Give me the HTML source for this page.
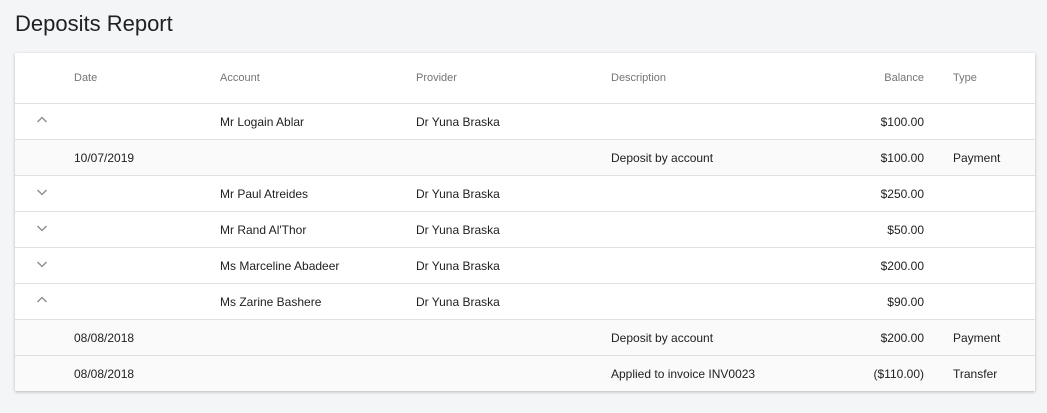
<!DOCTYPE html>
<html><head><style>
body{margin:0;width:1047px;height:413px;background:#f4f5f7;font-family:"Liberation Sans",Arial,sans-serif;color:#212121;position:relative;overflow:hidden}
h1{position:absolute;left:15px;top:11px;margin:0;font-size:22px;font-weight:normal;color:#212121}
.card{position:absolute;left:15px;top:53px;width:1020px;height:338px;background:#fff;box-shadow:0 1px 3px rgba(0,0,0,.25)}
.row{position:absolute;left:0;width:1020px;height:36px;border-top:1px solid #e0e0e0;box-sizing:border-box;font-size:12px;line-height:37px}
.row.sub{background:#fafafa}
.hd{position:absolute;top:0;left:0;width:1020px;height:50px;font-size:11px;line-height:51px;color:#757575}
.c{position:absolute;top:0;white-space:nowrap}
.d{left:59px}.a{left:205px}.p{left:401px}.ds{left:596px}.b{right:111px;text-align:right}.t{left:938px}
.ic{position:absolute;left:21px;top:12px}
</style></head><body>
<h1>Deposits Report</h1>
<div class="card">
<div class="hd"><span class="c d">Date</span><span class="c a">Account</span><span class="c p">Provider</span><span class="c ds">Description</span><span class="c b">Balance</span><span class="c t">Type</span></div>

<div class="row" style="top:50px"><svg class="ic" width="12" height="8" viewBox="0 0 12 8"><path d="M1.5 6L6 1.5L10.5 6" fill="none" stroke="#888" stroke-width="1.3"/></svg><span class="c a">Mr Logain Ablar</span><span class="c p">Dr Yuna Braska</span><span class="c b">$100.00</span></div>
<div class="row sub" style="top:86px"><span class="c d">10/07/2019</span><span class="c ds">Deposit by account</span><span class="c b">$100.00</span><span class="c t">Payment</span></div>
<div class="row" style="top:122px"><svg class="ic" width="12" height="8" viewBox="0 0 12 8"><path d="M1.5 2L6 6.5L10.5 2" fill="none" stroke="#888" stroke-width="1.3"/></svg><span class="c a">Mr Paul Atreides</span><span class="c p">Dr Yuna Braska</span><span class="c b">$250.00</span></div>
<div class="row" style="top:158px"><svg class="ic" width="12" height="8" viewBox="0 0 12 8"><path d="M1.5 2L6 6.5L10.5 2" fill="none" stroke="#888" stroke-width="1.3"/></svg><span class="c a">Mr Rand Al'Thor</span><span class="c p">Dr Yuna Braska</span><span class="c b">$50.00</span></div>
<div class="row" style="top:194px"><svg class="ic" width="12" height="8" viewBox="0 0 12 8"><path d="M1.5 2L6 6.5L10.5 2" fill="none" stroke="#888" stroke-width="1.3"/></svg><span class="c a">Ms Marceline Abadeer</span><span class="c p">Dr Yuna Braska</span><span class="c b">$200.00</span></div>
<div class="row" style="top:230px"><svg class="ic" width="12" height="8" viewBox="0 0 12 8"><path d="M1.5 6L6 1.5L10.5 6" fill="none" stroke="#888" stroke-width="1.3"/></svg><span class="c a">Ms Zarine Bashere</span><span class="c p">Dr Yuna Braska</span><span class="c b">$90.00</span></div>
<div class="row sub" style="top:266px"><span class="c d">08/08/2018</span><span class="c ds">Deposit by account</span><span class="c b">$200.00</span><span class="c t">Payment</span></div>
<div class="row sub" style="top:302px"><span class="c d">08/08/2018</span><span class="c ds">Applied to invoice INV0023</span><span class="c b">($110.00)</span><span class="c t">Transfer</span></div>
</div>
</body></html>
